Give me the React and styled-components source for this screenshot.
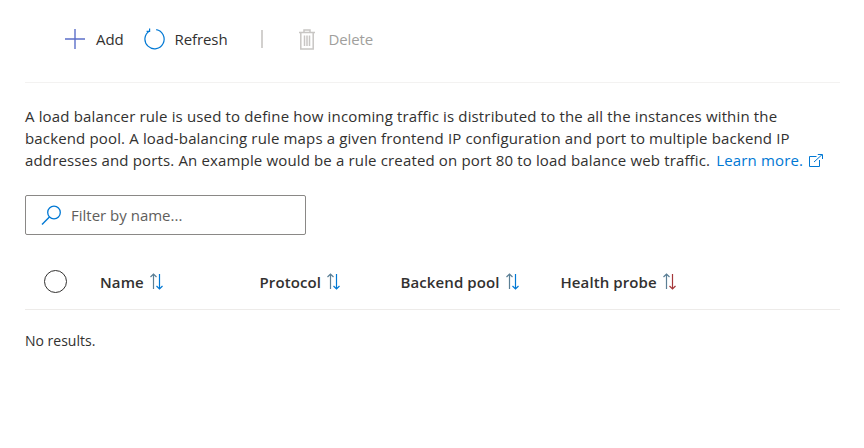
import React from "react";
import styled, { createGlobalStyle } from "styled-components";

const GlobalStyle = createGlobalStyle`
    html, body {
        margin: 0;
        padding: 0;
        background: #fff;
    }
    body {
        font-family: "Open Sans", "Noto Sans", sans-serif;
        color: #323130;
    }
`;

const Page = styled.div`
    width: 864px;
    height: 448px;
    padding: 0 24px 0 25px;
    box-sizing: border-box;
    overflow: hidden;
`;

const Toolbar = styled.div`
    display: flex;
    align-items: center;
    height: 83px;
    padding: 0 0 4px 40px;
    box-sizing: border-box;
    border-bottom: 1px solid #f3f2f1;
`;

const ToolButton = styled.button`
    display: flex;
    align-items: center;
    gap: ${(p) => p.$gap}px;
    margin-right: ${(p) => p.$after}px;
    padding: 0;
    border: none;
    background: none;
    font-family: inherit;
    font-size: 15px;
    letter-spacing: -0.1px;
    color: ${(p) => (p.disabled ? "#a19f9d" : "#323130")};
`;

const Divider = styled.span`
    width: 2px;
    height: 18px;
    margin-right: 35px;
    background: #d2d0ce;
`;

const Description = styled.p`
    margin: 22px 0 0;
    font-size: 15px;
    line-height: 22px;
    letter-spacing: 0.15px;
    color: #323130;
    width: 800px;
`;

const Link = styled.a`
    margin-left: 2px;
    color: #0078d4;
    text-decoration: none;
    white-space: nowrap;

    svg {
        margin-left: 6px;
        vertical-align: -1px;
    }
`;

const FilterBox = styled.div`
    display: flex;
    align-items: center;
    gap: 9px;
    width: 281px;
    height: 40px;
    margin-top: 24px;
    padding-left: 15px;
    box-sizing: border-box;
    border: 1px solid #8a8886;
    border-radius: 2px;
`;

const FilterInput = styled.input`
    flex: 1;
    min-width: 0;
    border: none;
    outline: none;
    padding: 0;
    font-family: inherit;
    font-size: 15px;
    background: none;

    &::placeholder {
        color: #605e5c;
        opacity: 1;
    }
`;

const HeaderRow = styled.div`
    display: grid;
    grid-template-columns: 75px 159.5px 141px 160px 1fr;
    align-items: center;
    height: 75px;
    padding-top: 19px;
    box-sizing: border-box;
    border-bottom: 1px solid #edebe9;
`;

const SelectCircle = styled.span`
    display: block;
    width: 23px;
    height: 23px;
    margin-left: 19px;
    border: 1.5px solid #323130;
    border-radius: 50%;
    box-sizing: border-box;
`;

const HeaderCell = styled.div`
    display: flex;
    align-items: center;
    gap: 5px;
    font-size: 15px;
    font-weight: 600;
    letter-spacing: 0.1px;
    color: #323130;
`;

const EmptyText = styled.div`
    margin-top: 21px;
    font-size: 14px;
    line-height: 20px;
    color: #323130;
`;

const PlusIcon = () => (
    <svg width="20" height="20" viewBox="0 0 20 20" fill="none">
        <path d="M0 10h20M10 0v20" stroke="#5c6fc9" strokeWidth="1.4" />
    </svg>
);

const RefreshIcon = () => (
    <svg width="22" height="22" viewBox="0 0 22 22" fill="none" stroke="#0078d4" strokeWidth="1.2">
        <path d="M6.6 2.9A9.6 9.6 0 1 0 13.2 1.7" />
        <path d="M6.6 0.6V3.4H3.6" />
    </svg>
);

const TrashIcon = () => (
    <svg width="18" height="21" viewBox="0 0 18 21" fill="none" stroke="#c8c6c4" strokeWidth="1.5">
        <path d="M1 3.5h16M6 3.5V1h6v2.5M2.8 3.5V20h12.4V3.5" />
        <path d="M6.5 6.5V17M9 6.5V17M11.5 6.5V17" />
    </svg>
);

const SearchIcon = () => (
    <svg width="21" height="20" viewBox="0 0 21 20" fill="none">
        <circle cx="13" cy="7.5" r="6.3" stroke="#0078d4" strokeWidth="1.3" />
        <path d="M8.4 12 1 19.4" stroke="#0078d4" strokeWidth="1.4" />
    </svg>
);

const ExternalIcon = () => (
    <svg width="14" height="13" viewBox="0 0 14 13" fill="none" stroke="#0078d4" strokeWidth="1">
        <path d="M7.5 2.5H.5v10h10V6" />
        <path d="M5 8l8-7.3M8.8.5h4.7v4.5" />
    </svg>
);

const SortIcon = ({ down = "#0078d4" }) => (
    <svg width="15" height="17" viewBox="0 0 15 17" fill="none" strokeWidth="1.2">
        <path d="M4.5 16V1M1.5 4 4.5 1 7.5 4" stroke="#5b7f95" />
        <path d="M10.5 1v15M7.5 13l3 3 3-3" stroke={down} />
    </svg>
);

const columns = [
    { name: "Name" },
    { name: "Protocol" },
    { name: "Backend pool" },
    { name: "Health probe", down: "#a4373a" },
];

export default function App() {
    return (
        <Page>
            <GlobalStyle />
            <Toolbar>
                <ToolButton $gap={11} $after={19}>
                    <PlusIcon />
                    Add
                </ToolButton>
                <ToolButton $gap={10} $after={34}>
                    <RefreshIcon />
                    Refresh
                </ToolButton>
                <Divider />
                <ToolButton disabled $gap={12} $after={0}>
                    <TrashIcon />
                    Delete
                </ToolButton>
            </Toolbar>
            <Description>
                A load balancer rule is used to define how incoming traffic is distributed to the all the instances within the
                backend pool. A load-balancing rule maps a given frontend IP configuration and port to multiple backend IP
                addresses and ports. An example would be a rule created on port 80 to load balance web traffic.{" "}
                <Link href="#">
                    Learn more.
                    <ExternalIcon />
                </Link>
            </Description>
            <FilterBox>
                <SearchIcon />
                <FilterInput placeholder="Filter by name..." />
            </FilterBox>
            <HeaderRow>
                <SelectCircle />
                {columns.map((col) => (
                    <HeaderCell key={col.name}>
                        {col.name}
                        <SortIcon down={col.down} />
                    </HeaderCell>
                ))}
            </HeaderRow>
            <EmptyText>No results.</EmptyText>
        </Page>
    );
}
